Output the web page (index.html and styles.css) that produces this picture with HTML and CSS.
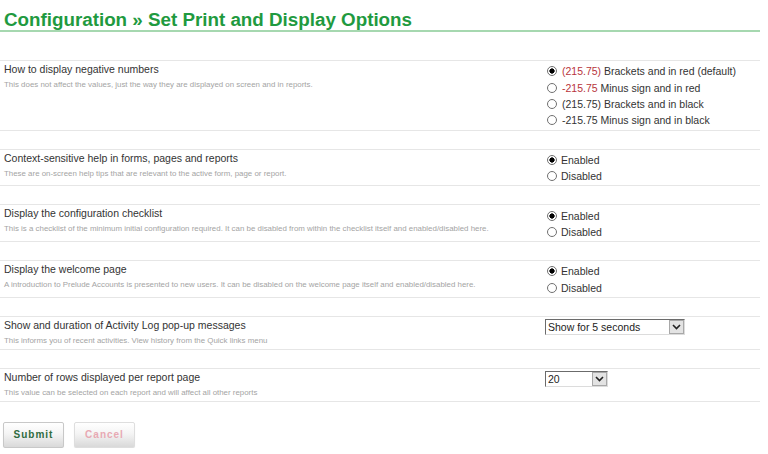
FILE: index.html
```html
<!DOCTYPE html>
<html lang="en">
<head>
    <meta charset="UTF-8">
    <title>Configuration - Set Print and Display Options</title>
    <link rel="stylesheet" href="styles.css">
</head>
<body>
    <div class="page">
        <h1 class="title">Configuration &raquo; Set Print and Display Options</h1>
        <form class="opts">
            <div class="opt-row">
                <div class="opt-text">
                    <div class="opt-label">How to display negative numbers</div>
                    <div class="opt-desc">This does not affect the values, just the way they are displayed on screen and in reports.</div>
                </div>
                <div class="opt-ctrl">
                    <label class="radio wide"><input type="radio" name="neg" checked><span><em class="red">(215.75)</em> Brackets and in red (default)</span></label>
                    <label class="radio wide"><input type="radio" name="neg"><span><em class="red">-215.75</em> Minus sign and in red</span></label>
                    <label class="radio wide"><input type="radio" name="neg"><span>(215.75) Brackets and in black</span></label>
                    <label class="radio wide"><input type="radio" name="neg"><span>-215.75 Minus sign and in black</span></label>
                </div>
            </div>
            <div class="opt-row">
                <div class="opt-text">
                    <div class="opt-label">Context-sensitive help in forms, pages and reports</div>
                    <div class="opt-desc">These are on-screen help tips that are relevant to the active form, page or report.</div>
                </div>
                <div class="opt-ctrl">
                    <label class="radio"><input type="radio" name="help" checked><span>Enabled</span></label>
                    <label class="radio"><input type="radio" name="help"><span>Disabled</span></label>
                </div>
            </div>
            <div class="opt-row">
                <div class="opt-text">
                    <div class="opt-label">Display the configuration checklist</div>
                    <div class="opt-desc">This is a checklist of the minimum initial configuration required. It can be disabled from within the checklist itself and enabled/disabled here.</div>
                </div>
                <div class="opt-ctrl">
                    <label class="radio"><input type="radio" name="check" checked><span>Enabled</span></label>
                    <label class="radio"><input type="radio" name="check"><span>Disabled</span></label>
                </div>
            </div>
            <div class="opt-row">
                <div class="opt-text">
                    <div class="opt-label">Display the welcome page</div>
                    <div class="opt-desc">A introduction to Prelude Accounts is presented to new users. It can be disabled on the welcome page itself and enabled/disabled here.</div>
                </div>
                <div class="opt-ctrl">
                    <label class="radio"><input type="radio" name="welcome" checked><span>Enabled</span></label>
                    <label class="radio"><input type="radio" name="welcome"><span>Disabled</span></label>
                </div>
            </div>
            <div class="opt-row">
                <div class="opt-text">
                    <div class="opt-label">Show and duration of Activity Log pop-up messages</div>
                    <div class="opt-desc">This informs you of recent activities. View history from the Quick links menu</div>
                </div>
                <div class="opt-ctrl">
                    <div class="dropdown dd-long">
                        <select><option>Show for 5 seconds</option><option>Show for 10 seconds</option><option>Do not show</option></select>
                        <span class="dd-btn"><svg width="9" height="6" viewBox="0 0 9 6"><path d="M1 1 L4.5 4.5 L8 1" fill="none" stroke="#222" stroke-width="1.6"/></svg></span>
                    </div>
                </div>
            </div>
            <div class="opt-row">
                <div class="opt-text">
                    <div class="opt-label">Number of rows displayed per report page</div>
                    <div class="opt-desc">This value can be selected on each report and will affect all other reports</div>
                </div>
                <div class="opt-ctrl">
                    <div class="dropdown dd-short">
                        <select><option>20</option><option>50</option><option>100</option></select>
                        <span class="dd-btn"><svg width="9" height="6" viewBox="0 0 9 6"><path d="M1 1 L4.5 4.5 L8 1" fill="none" stroke="#222" stroke-width="1.6"/></svg></span>
                    </div>
                </div>
            </div>
            <div class="buttons">
                <button type="button" class="btn btn-submit">Submit</button>
                <button type="button" class="btn btn-cancel">Cancel</button>
            </div>
        </form>
    </div>
</body>
</html>
```

FILE: styles.css
```css
* { box-sizing: border-box; margin: 0; padding: 0; }
body { font-family: 'Liberation Sans', Arial, sans-serif; background: #fff; color: #333; }
.page { width: 760px; padding-top: 11px; }
.title { font-size: 18.8px; font-weight: bold; color: #1f9a40; line-height: 18px; padding: 0 0 1px 4px; border-bottom: 2px solid #a6d8b0; margin-bottom: 28px; }
.opt-row { display: flex; border-top: 1px solid #e6e6e6; border-bottom: 1px solid #e6e6e6; padding: 1px 0; margin-bottom: 18px; }
.opt-row.short { margin-bottom: 17px; }
.opt-text { flex: 1; padding-left: 4px; }
.opt-label { font-size: 10.5px; line-height: 15px; color: #333; }
.opt-desc { font-size: 7.9px; line-height: 15px; color: #a4a4a4; white-space: nowrap; }
.opt-ctrl { width: 215px; padding-top: 1px; }
.radio { display: flex; align-items: center; height: 16.4px; font-size: 10.5px; color: #333; padding-left: 2px; }
.radio.wide { height: 16.4px; }
.radio input { appearance: none; -webkit-appearance: none; width: 10px; height: 10px; border: 1px solid #707070; border-radius: 50%; background: #fff; margin-right: 4px; flex: none; }
.radio input:checked { background: radial-gradient(circle, #000 0, #000 2.4px, #fff 2.8px); }
.radio.wide input { margin-right: 5px; }
.radio em { font-style: normal; }
.red { color: #b8343c; }
.dropdown { position: relative; height: 16px; }
.dd-long { width: 140px; }
.dd-short { width: 63px; }
.dropdown select { display: block; appearance: none; -webkit-appearance: none; width: 100%; height: 16px; font-family: 'Liberation Sans', Arial, sans-serif; font-size: 10.5px; color: #222; border: 1px solid; border-color: #6b6b6b #dcdcdc #dcdcdc #6b6b6b; background: #fff; padding: 0 0 0 2px; border-radius: 0; outline: none; }
.dd-btn { position: absolute; right: 1px; top: 1px; width: 15px; height: 14px; background: #e3e3e3; border: 1px solid #a8a8a8; display: flex; align-items: center; justify-content: center; pointer-events: none; }
.buttons { display: flex; gap: 10px; padding: 2px 0 0 3px; }
.btn { width: 61px; height: 26px; font-family: 'Liberation Sans', Arial, sans-serif; font-size: 10px; font-weight: bold; letter-spacing: 1px; border: 1px solid #c8c8c8; border-radius: 2px; background: linear-gradient(#ffffff 0%, #f4f4f4 45%, #d9d9d9 100%); box-shadow: 0 1px 1px rgba(0,0,0,0.08); }
.btn-submit { color: #2f6b40; }
.btn-cancel { color: #e8a9b3; border-color: #dedede; }
```
